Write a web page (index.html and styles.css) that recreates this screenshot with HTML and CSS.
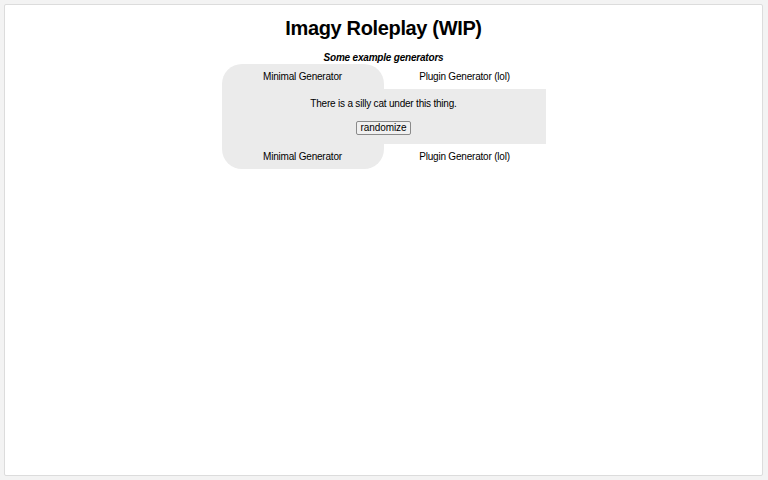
FILE: index.html
```html
<!DOCTYPE html>
<html lang="en">
<head>
<meta charset="utf-8">
<title>Imagy Roleplay (WIP)</title>
<link rel="stylesheet" href="styles.css">
</head>
<body>
<main class="page">
  <h1 class="title">Imagy Roleplay (WIP)</h1>
  <p class="caption">Some example generators</p>
  <div class="gen-grid">
    <div class="gen-col-bg"></div>
    <div class="gen-band"></div>
    <div class="gen-tab r1 c1">Minimal Generator</div>
    <div class="gen-tab r1 c2">Plugin Generator (lol)</div>
    <div class="gen-output">
      <div class="gen-text">There is a silly cat under this thing.</div>
      <button class="gen-btn" type="button">randomize</button>
    </div>
    <div class="gen-tab r3 c1">Minimal Generator</div>
    <div class="gen-tab r3 c2">Plugin Generator (lol)</div>
  </div>
</main>
</body>
</html>
```

FILE: styles.css
```css
html, body {
  margin: 0;
  padding: 0;
}

body {
  background: #f3f3f3;
  font-family: "Liberation Sans", Arial, sans-serif;
  color: #000;
}

.page {
  box-sizing: border-box;
  margin: 4px 5px 4px 4px;
  height: 472px;
  background: #fff;
  border: 1px solid #dcdcdc;
  border-radius: 2px;
  padding-top: 11px;
  display: flex;
  flex-direction: column;
  align-items: center;
}

.title {
  margin: 0;
  font-size: 20px;
  line-height: 24px;
  font-weight: bold;
  letter-spacing: -0.35px;
}

.caption {
  margin: 12px 0 0;
  font-size: 10px;
  line-height: 12px;
  font-weight: bold;
  font-style: italic;
  letter-spacing: -0.2px;
}

.gen-grid {
  display: grid;
  grid-template-columns: 162px 162px;
  grid-template-rows: 25px 55px 25px;
  font-size: 10px;
  letter-spacing: -0.2px;
}

/* rounded backdrop behind the first column, all three rows */
.gen-col-bg {
  grid-column: 1;
  grid-row: 1 / 4;
  background: #ebebeb;
  border-radius: 20px;
}

/* full-width band behind the output row */
.gen-band {
  grid-column: 1 / 3;
  grid-row: 2;
  background: #ebebeb;
}

.gen-tab {
  display: flex;
  align-items: center;
  justify-content: center;
}

.r1 { grid-row: 1; }
.r3 { grid-row: 3; }
.c1 { grid-column: 1; }
.c2 { grid-column: 2; }

.gen-output {
  grid-column: 1 / 3;
  grid-row: 2;
  display: flex;
  flex-direction: column;
  align-items: center;
  padding-top: 9px;
}

.gen-text {
  line-height: 12px;
}

.gen-btn {
  margin-top: 11px;
  font-family: "Liberation Sans", Arial, sans-serif;
  font-size: 10px;
  line-height: 12px;
  letter-spacing: -0.1px;
  padding: 0 4px;
  background: #f0f0f0;
  border: 1px solid #8a8a8a;
  border-radius: 2px;
  color: #000;
}
```
